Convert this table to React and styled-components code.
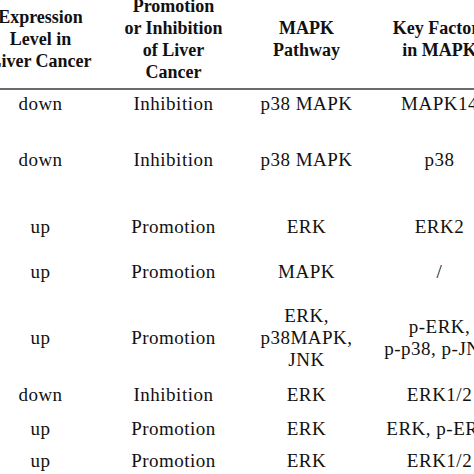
import React from 'react';
import styled, { createGlobalStyle } from 'styled-components';

const GlobalStyle = createGlobalStyle`
  html, body {
    margin: 0;
    padding: 0;
    background: #fff;
    overflow: hidden;
  }
`;

const Page = styled.div`
  width: 474px;
  height: 474px;
  overflow: hidden;
  background: #fff;
  color: #111;
  font-family: "Liberation Serif", "Times New Roman", serif;
`;

const Table = styled.div`
  margin-left: -26px;
  width: 532px;
`;

const HeadRow = styled.div`
  display: flex;
  align-items: center;
  height: 90px;
  padding-bottom: 10px;
  box-sizing: border-box;
  border-bottom: 2px solid #6b6b6b;
`;

const HeadCell = styled.div`
  width: 133px;
  flex: none;
  text-align: center;
  font-size: 18px;
  font-weight: bold;
  line-height: 22px;
`;

const Row = styled.div`
  display: flex;
  align-items: center;
  padding-top: ${(p) => p.$gap}px;
`;

const Cell = styled.div`
  width: 133px;
  flex: none;
  text-align: center;
  font-size: 19px;
  line-height: 22px;
  letter-spacing: 0.5px;
  white-space: nowrap;
`;

const header = [
  ['Expression', 'Level in', 'Liver Cancer'],
  ['Promotion', 'or Inhibition', 'of Liver', 'Cancer'],
  ['MAPK', 'Pathway'],
  ['Key Factors', 'in MAPK'],
];

const rows = [
  { gap: 3, cells: [['down'], ['Inhibition'], ['p38 MAPK'], ['MAPK14']] },
  { gap: 34, cells: [['down'], ['Inhibition'], ['p38 MAPK'], ['p38']] },
  { gap: 45, cells: [['up'], ['Promotion'], ['ERK'], ['ERK2']] },
  { gap: 23, cells: [['up'], ['Promotion'], ['MAPK'], ['/']] },
  { gap: 22, cells: [['up'], ['Promotion'], ['ERK,', 'p38MAPK,', 'JNK'], ['p-ERK,', 'p-p38, p-JNK']] },
  { gap: 13, cells: [['down'], ['Inhibition'], ['ERK'], ['ERK1/2']] },
  { gap: 12, cells: [['up'], ['Promotion'], ['ERK'], ['ERK, p-ERK']] },
  { gap: 10, cells: [['up'], ['Promotion'], ['ERK'], ['ERK1/2']] },
];

function Lines({ lines }) {
  return lines.map((l, i) => (
    <React.Fragment key={i}>
      {i > 0 && <br />}
      {l}
    </React.Fragment>
  ));
}

export default function App() {
  return (
    <Page>
      <GlobalStyle />
      <Table>
        <HeadRow>
          {header.map((h, i) => (
            <HeadCell key={i}>
              <Lines lines={h} />
            </HeadCell>
          ))}
        </HeadRow>
        {rows.map((r, i) => (
          <Row key={i} $gap={r.gap}>
            {r.cells.map((c, j) => (
              <Cell key={j}>
                <Lines lines={c} />
              </Cell>
            ))}
          </Row>
        ))}
      </Table>
    </Page>
  );
}
